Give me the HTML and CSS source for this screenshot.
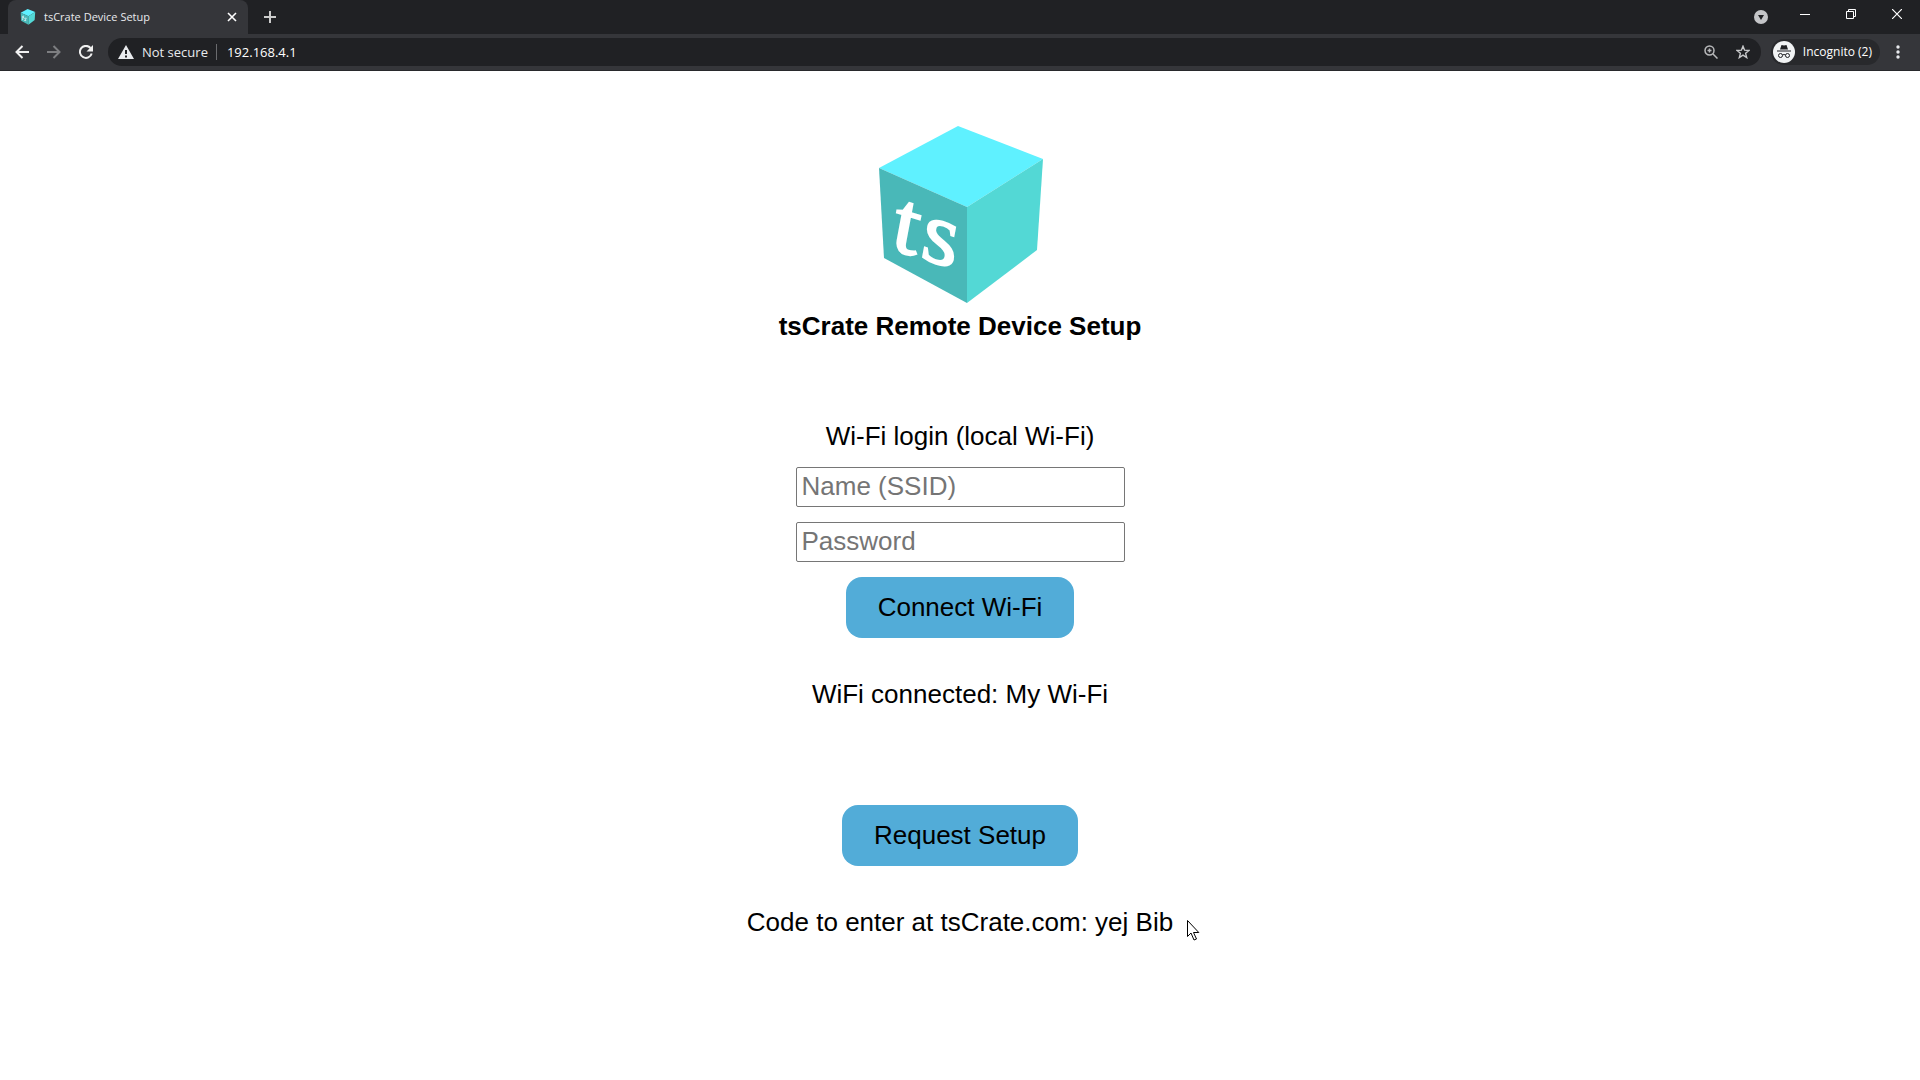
FILE: index.html
```html
<!DOCTYPE html>
<html lang="en">
<head>
    <meta charset="UTF-8">
    <meta name="viewport" content="width=device-width, initial-scale=1.0">
    <title>tsCrate Device Setup</title>
    <link rel="stylesheet" href="styles.css">
</head>
<body>
    <header class="browser">
        <div class="tab-strip">
            <div class="tab">
                <svg class="favicon" viewBox="0 0 166 180" aria-hidden="true">
                    <path fill="#5ff1ff" d="M79 1 164 34 88 81 1 43Z"/>
                    <path fill="#49b8b8" d="M1 43 88 81V178L5 133Z"/>
                    <path fill="#53d8d5" d="M88 81 164 34 158 125 88 178Z"/>
                    <path fill="none" stroke="#fff" stroke-width="8" d="M30 75 22 125M15 88 40 94M68 105Q45 98 46 110 62 120 60 128 50 138 40 126"/>
                </svg>
                <span class="tab-title">tsCrate Device Setup</span>
                <button class="icon-button" aria-label="Close tab">
                    <svg width="10" height="10" viewBox="0 0 10 10"><path d="M1 1 9 9M9 1 1 9" stroke="#fff" stroke-width="1.600"/></svg>
                </button>
            </div>
            <button class="icon-button new-tab" aria-label="New tab">
                <svg width="12" height="12" viewBox="0 0 12 12"><path d="M6 0V12M0 6H12" stroke="#ccc" stroke-width="2"/></svg>
            </button>
            <div class="window-buttons">
                <button class="icon-button" aria-label="Search tabs">
                    <svg width="14" height="14" viewBox="0 0 14 14"><circle cx="7" cy="7" r="7" fill="#c4c5c8"/><path d="M4 5H10L7 10Z" fill="#202124"/></svg>
                </button>
                <button class="icon-button window-button" aria-label="Minimize">
                    <svg width="10" height="10" viewBox="0 0 10 10"><path d="M0 5.5H10" stroke="#fff"/></svg>
                </button>
                <button class="icon-button window-button" aria-label="Restore">
                    <svg width="10" height="10" viewBox="0 0 10 10"><path d="M.5 2.500H7.500V9.500H.5ZM2.500 2.500V.5H9.500V7.500H7.500" fill="none" stroke="#fff"/></svg>
                </button>
                <button class="icon-button window-button" aria-label="Close">
                    <svg width="10" height="10" viewBox="0 0 10 10"><path d="M0 0 10 10M10 0 0 10" stroke="#fff" stroke-width="1.200"/></svg>
                </button>
            </div>
        </div>
        <div class="toolbar">
            <button class="icon-button nav-button" aria-label="Back">
                <svg width="14" height="14" viewBox="0 0 14 14"><path d="M14 7H1.500M7.500 1 1.500 7 7.500 13" fill="none" stroke="#f1f1f1" stroke-width="2"/></svg>
            </button>
            <button class="icon-button nav-button" aria-label="Forward">
                <svg width="14" height="14" viewBox="0 0 14 14"><path d="M0 7H12.500M6.500 1 12.500 7 6.500 13" fill="none" stroke="#7d7e81" stroke-width="2"/></svg>
            </button>
            <button class="icon-button nav-button" aria-label="Reload">
                <svg width="14" height="14" viewBox="0 0 14 14"><path d="M12.700 8.500A6 6 0 1 1 11.500 3" fill="none" stroke="#f1f1f1" stroke-width="2"/><path d="M14 0V6.500H7.500Z" fill="#f1f1f1"/></svg>
            </button>
            <div class="address-bar">
                <svg width="16" height="14" viewBox="0 0 16 14" aria-hidden="true"><path fill="#e8eaed" fill-rule="evenodd" d="M8 0 16 14H0ZM7 5V9H9V5ZM7 10.500V12.500H9V10.500Z"/></svg>
                <span class="not-secure">Not secure</span>
                <input class="address" type="text" value="192.168.4.1" aria-label="Address">
                <button class="icon-button" aria-label="Zoom">
                    <svg width="14" height="14" viewBox="0 0 14 14"><circle cx="5.500" cy="5.500" r="4.500" fill="none" stroke="#b8b9bb" stroke-width="1.500"/><path d="M9 9 13.500 13.500M5.500 3.500V7.500M3.500 5.500H7.500" stroke="#b8b9bb" stroke-width="1.500"/></svg>
                </button>
                <button class="icon-button" aria-label="Bookmark">
                    <svg width="14" height="14" viewBox="0 0 14 14"><path d="M7 1.200 8.600 5.200 13 5.500 9.600 8.300 10.700 12.600 7 10.200 3.300 12.600 4.400 8.300 1 5.500 5.400 5.200Z" fill="none" stroke="#c8c9cb" stroke-width="1.400"/></svg>
                </button>
            </div>
            <button class="profile">
                <svg width="22" height="22" viewBox="0 0 22 22" aria-hidden="true">
                    <circle cx="11" cy="11" r="11" fill="#f1f3f4"/>
                    <path fill="#202124" d="M7 8.500 8.500 4 11 4.600 13.500 4 15 8.500ZM4 9.500H18V10.500H4Z"/>
                    <circle cx="7.500" cy="14.500" r="2" fill="none" stroke="#202124"/>
                    <circle cx="14.500" cy="14.500" r="2" fill="none" stroke="#202124"/>
                    <path d="M9.500 14Q11 13 12.500 14" fill="none" stroke="#202124"/>
                </svg>
                Incognito (2)
            </button>
            <button class="icon-button menu-button" aria-label="Menu">
                <svg width="4" height="14" viewBox="0 0 4 14"><g fill="#e8eaed"><circle cx="2" cy="2" r="1.700"/><circle cx="2" cy="7" r="1.700"/><circle cx="2" cy="12" r="1.700"/></g></svg>
            </button>
        </div>
    </header>

    <main>
        <svg class="logo" viewBox="0 0 166 180" role="img" aria-label="tsCrate logo">
            <path fill="#5ff1ff" d="M81 0 166 33 90 81 2 42Z"/>
            <path fill="#49b8b8" d="M2 42 90 81V177L7 132Z"/>
            <path fill="#53d8d5" d="M90 81 166 33 160 124 90 177Z"/>
            <text class="logo-text" x="16 45" y="119" transform="skewY(17)">ts</text>
        </svg>
        <h1>tsCrate Remote Device Setup</h1>

        <form>
            <p class="form-title">Wi-Fi login (local Wi-Fi)</p>
            <input class="field" type="text" id="ssid" placeholder="Name (SSID)" aria-label="Name (SSID)">
            <input class="field" type="password" id="password" placeholder="Password" aria-label="Password">
            <button class="action" type="button">Connect Wi-Fi</button>
        </form>
        <p class="status">WiFi connected: My Wi-Fi</p>

        <button class="action request" type="button">Request Setup</button>
        <p class="status code">Code to enter at tsCrate.com: yej Bib
            <svg class="cursor" width="13" height="22" viewBox="0 0 13 22" aria-hidden="true"><path d="M.5 .5V16.500L4 13 7 20 9.500 19 6.500 12.500H11.800Z" fill="#fff" stroke="#000"/></svg>
        </p>
    </main>
</body>
</html>
```
FILE: styles.css
```css
* {
    margin: 0;
    padding: 0;
    box-sizing: border-box;
}

body {
    font-family: Arial, "Liberation Sans", sans-serif;
    font-size: 26px;
    line-height: 30px;
    color: #000;
    background: #fff;
}

button {
    border: none;
    cursor: pointer;
}

/* Browser bar */
.browser {
    font-family: "Open Sans", sans-serif;
    font-size: 13px;
    line-height: 18px;
    color: #e8eaed;
    background: #202124;
}

.tab-strip {
    display: flex;
    height: 34px;
    padding-left: 8px;
}

.tab {
    display: flex;
    align-items: center;
    gap: 8px;
    width: 240px;
    padding: 0 8px 0 12px;
    border-radius: 8px 8px 0 0;
    background: #35363a;
}

.favicon {
    width: 16px;
    height: 16px;
}

.tab-title {
    flex: 1;
    font-size: 11px;
    white-space: nowrap;
}

.icon-button {
    display: flex;
    align-items: center;
    justify-content: center;
    width: 16px;
    background: none;
}

.new-tab {
    width: 44px;
}

.window-buttons {
    display: flex;
    margin-left: auto;
}

.window-buttons .icon-button {
    width: 42px;
}

.window-buttons .window-button {
    width: 46px;
    height: 28px;
}

.toolbar {
    display: flex;
    align-items: center;
    height: 37px;
    padding: 0 12px 0 6px;
    background: #35363a;
    border-bottom: 1px solid #28292c;
}

.nav-button {
    width: 32px;
}

.address-bar {
    display: flex;
    flex: 1;
    align-items: center;
    gap: 8px;
    height: 28px;
    margin: 0 10px 0 6px;
    padding: 0 10px;
    border-radius: 14px;
    background: #202124;
}

.not-secure {
    padding-right: 8px;
    border-right: 1px solid #6a6b6e;
    line-height: 16px;
}

.address {
    flex: 1;
    padding-left: 2px;
    border: none;
    outline: none;
    font: inherit;
    color: #fff;
    background: none;
}

.address-bar .icon-button + .icon-button {
    margin-left: 8px;
}

.profile {
    display: flex;
    align-items: center;
    gap: 8px;
    height: 26px;
    padding: 0 8px 0 2px;
    border-radius: 13px;
    font: inherit;
    font-size: 12px;
    color: #fff;
    background: #28292c;
}

.menu-button {
    width: 20px;
    margin-left: 8px;
}

/* Setup page */
main {
    display: flex;
    flex-direction: column;
    align-items: center;
    padding: 55px 8px;
    text-align: center;
}

.logo {
    width: 166px;
    height: 180px;
}

.logo-text {
    font-family: "Liberation Serif", serif;
    font-size: 92px;
    font-style: italic;
    fill: #fff;
    stroke: #fff;
    stroke-width: 2px;
}

h1 {
    margin-top: 5px;
    font-size: 26px;
    line-height: 30px;
}

form {
    display: flex;
    flex-direction: column;
    align-items: center;
    gap: 15px;
    margin-top: 80px;
}

.form-title {
    margin-bottom: 1px;
}

.field {
    width: 329px;
    height: 40px;
    padding: 2px 5px 4px;
    border: 1px solid #767676;
    border-radius: 2px;
    font: inherit;
}

.field::placeholder {
    color: #757575;
}

.action {
    height: 61px;
    padding: 0 32px 2px;
    border-radius: 16px;
    font: inherit;
    color: #000;
    background: #52acd8;
}

.status {
    margin-top: 41px;
}

.request {
    margin-top: 96px;
}

.code {
    position: relative;
}

.cursor {
    position: absolute;
    top: 13px;
    left: calc(100% + 14px);
}
```
